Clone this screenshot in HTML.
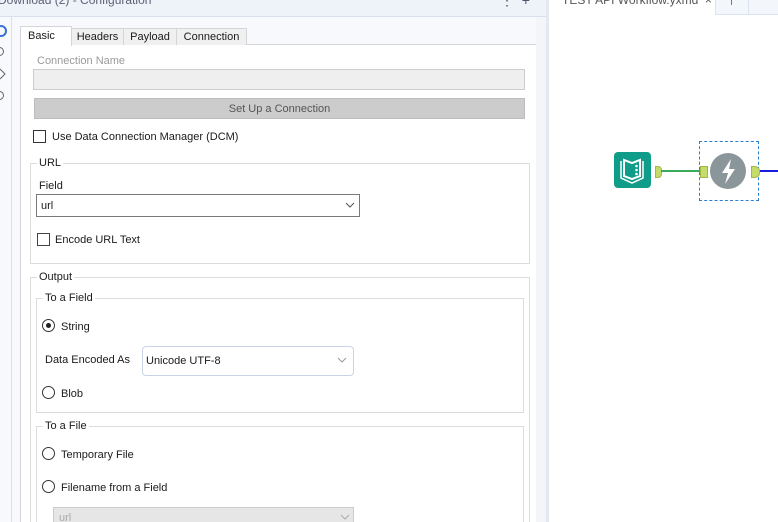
<!DOCTYPE html>
<html style="overflow:hidden;width:778px;height:522px"><head><style>
body{margin:0;width:778px;height:522px;overflow:hidden;background:#f7f9fc;font-family:"Liberation Sans",sans-serif;font-size:11px;color:#1a1a1a;position:relative}
.a{position:absolute}
.t{position:absolute;white-space:nowrap;line-height:13px}
.grp{position:absolute;border:1px solid #dcdcdc}
.cb{position:absolute;width:11px;height:11px;border:1px solid #333;background:#fff}
.rd{position:absolute;width:11px;height:11px;border:1px solid #333;border-radius:50%;background:#fff}
.tab{position:absolute;top:28px;height:16px;background:#f0f0f0;border:1px solid #d5d5d5;border-bottom:none;text-align:center;line-height:16px}
</style></head><body>
<div class="a" style="left:0;top:0;width:546px;height:16px;background:#eef2f9;border-bottom:1px solid #d9e0ec"></div>
<div class="t" style="left:-2px;top:-6px;color:#5a6275;font-size:12px">Download (2) - Configuration</div>
<div class="t" style="left:500px;top:-6px;color:#4a5570;font-size:14px">⋮&nbsp;&nbsp;+</div>
<div class="a" style="left:11px;top:17px;width:1px;height:505px;background:#d9e0ec"></div>
<div class="a" style="left:-5px;top:25px;width:8px;height:8px;border:2px solid #3a6fd8;border-radius:50%"></div>
<div class="a" style="left:-5px;top:47px;width:7px;height:7px;border:1px solid #666;border-radius:50%"></div>
<svg class="a" style="left:0;top:68px" width="6" height="12"><path d="M0 1l5 5-5 5" fill="none" stroke="#666"/></svg>
<div class="a" style="left:-5px;top:91px;width:7px;height:7px;border:1px solid #666;border-radius:50%"></div>
<div class="a" style="left:20px;top:44px;width:516px;height:490px;background:#fff;border:1px solid #d5d5d5"></div>
<div class="tab" style="left:71px;width:51px">Headers</div>
<div class="tab" style="left:123px;width:52px">Payload</div>
<div class="tab" style="left:176px;width:69px">Connection</div>
<div class="a" style="left:20px;top:26px;width:50px;height:19px;background:#fff;border:1px solid #d5d5d5;border-bottom:none"></div>
<div class="t" style="left:28px;top:30px">Basic</div>
<div class="t" style="left:37px;top:55px;color:#9a9a9a">Connection Name</div>
<div class="a" style="left:33px;top:69px;width:490px;height:19px;background:#efefef;border:1px solid #ccc"></div>
<div class="a" style="left:34px;top:98px;width:489px;height:19px;background:#ccc;border:1px solid #bcbcbc;text-align:center;line-height:20px;color:#555">Set Up a Connection</div>
<div class="cb" style="left:33px;top:130px"></div>
<div class="t" style="left:52px;top:131px">Use Data Connection Manager (DCM)</div>
<div class="grp" style="left:30px;top:163px;width:498px;height:99px"></div>
<div class="t" style="left:37px;top:157px;background:#fff;padding:0 2px">URL</div>
<div class="t" style="left:39px;top:180px">Field</div>
<div class="a" style="left:36px;top:194px;width:322px;height:21px;border:1px solid #7a7a7a"></div>
<div class="t" style="left:41px;top:200px">url</div>
<svg class="a" style="left:345px;top:202px" width="10" height="6"><path d="M1 1l4 4 4-4" fill="none" stroke="#555"/></svg>
<div class="cb" style="left:37px;top:233px;border-color:#444"></div>
<div class="t" style="left:55px;top:234px">Encode URL Text</div>
<div class="grp" style="left:30px;top:277px;width:498px;height:260px"></div>
<div class="t" style="left:37px;top:271px;background:#fff;padding:0 2px">Output</div>
<div class="grp" style="left:36px;top:298px;width:486px;height:113px"></div>
<div class="t" style="left:43px;top:292px;background:#fff;padding:0 2px">To a Field</div>
<div class="rd" style="left:42px;top:319px"></div><div class="a" style="left:46px;top:323px;width:5px;height:5px;border-radius:50%;background:#222"></div>
<div class="t" style="left:61px;top:321px">String</div>
<div class="t" style="left:45px;top:354px">Data Encoded As</div>
<div class="a" style="left:142px;top:346px;width:210px;height:28px;border:1px solid #c8d4e6;border-radius:4px"></div>
<div class="t" style="left:146px;top:355px">Unicode UTF-8</div>
<svg class="a" style="left:337px;top:357px" width="10" height="6"><path d="M1 1l4 4 4-4" fill="none" stroke="#999"/></svg>
<div class="rd" style="left:42px;top:386px"></div>
<div class="t" style="left:61px;top:388px">Blob</div>
<div class="grp" style="left:36px;top:426px;width:486px;height:110px"></div>
<div class="t" style="left:43px;top:420px;background:#fff;padding:0 2px">To a File</div>
<div class="rd" style="left:42px;top:447px"></div>
<div class="t" style="left:61px;top:449px">Temporary File</div>
<div class="rd" style="left:42px;top:480px"></div>
<div class="t" style="left:61px;top:482px">Filename from a Field</div>
<div class="a" style="left:53px;top:507px;width:299px;height:20px;background:#e6e6e6;border:1px solid #ccc"></div>
<div class="t" style="left:59px;top:512px;color:#aaa">url</div>
<svg class="a" style="left:340px;top:514px" width="10" height="6"><path d="M1 1l4 4 4-4" fill="none" stroke="#aaa"/></svg>
<div class="a" style="left:536px;top:17px;width:10px;height:505px;background:#f3f5f9"></div>
<div class="a" style="left:546px;top:0;width:3px;height:522px;background:#e3e8f1"></div>
<div class="a" style="left:549px;top:0;width:229px;height:522px;background:#fff"></div>
<div class="t" style="left:562px;top:-6px;color:#555;font-size:12px">TEST API Workflow.yxmd&nbsp; ×</div>
<div class="a" style="left:715px;top:0;width:63px;height:14px;background:#f3f6fb;border-bottom:1px solid #dde3ee;border-left:1px solid #dde3ee"></div>
<div class="a" style="left:748px;top:0;width:1px;height:14px;background:#dde3ee"></div>
<div class="a" style="left:731px;top:0;width:1px;height:5px;background:#777"></div>
<div class="a" style="left:614px;top:152px;width:37px;height:36px;background:#0f9d8a;border-radius:4px"></div>
<svg class="a" style="left:614px;top:152px" width="37" height="36"><path d="M7 9v17l11 5 11-5V9" fill="none" stroke="#fff" stroke-width="1.5"/><path d="M10 8v16l8 3 8-3V8l-8 3z" fill="none" stroke="#fff" stroke-width="2"/><circle cx="22.5" cy="14" r="1.3" fill="#fff"/><circle cx="22.5" cy="18" r="1.3" fill="#fff"/><circle cx="22.5" cy="22" r="1.3" fill="#fff"/></svg>
<div class="a" style="left:655px;top:166px;width:5px;height:10px;background:#c5dc6a;border:1px solid #9fb84a;border-radius:0 4px 4px 0"></div>
<div class="a" style="left:661px;top:170px;width:40px;height:2px;background:#3aaa5a"></div>
<div class="a" style="left:699px;top:141px;width:58px;height:58px;border:1px dashed #2a7fd4"></div>
<div class="a" style="left:700px;top:166px;width:6px;height:10px;background:#c5dc6a;border:1px solid #9fb84a"></div>
<div class="a" style="left:710px;top:153px;width:36px;height:36px;border-radius:50%;background:#8a9699"></div>
<svg class="a" style="left:710px;top:153px" width="36" height="36"><path d="M21 6l-9 14h6l-3 11 10-15h-6z" fill="#fff"/></svg>
<div class="a" style="left:751px;top:166px;width:7px;height:10px;background:#c5dc6a;border:1px solid #9fb84a;border-radius:0 5px 5px 0"></div>
<div class="a" style="left:760px;top:170px;width:18px;height:2px;background:#1a1ae0"></div>
</body></html>
